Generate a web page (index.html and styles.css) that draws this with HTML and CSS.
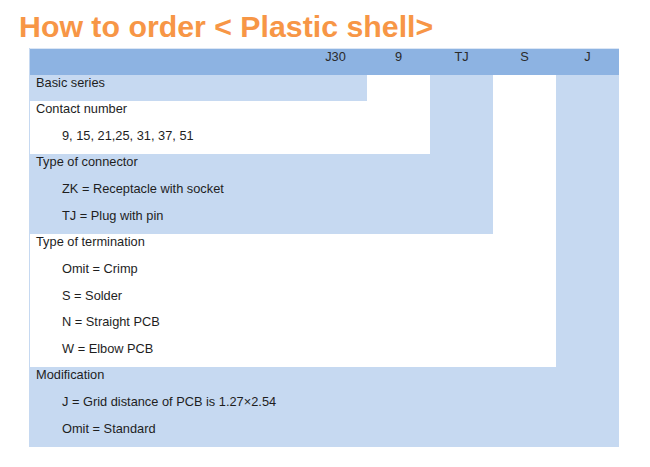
FILE: index.html
```html
<!DOCTYPE html>
<html lang="en">
<head>
    <meta charset="UTF-8">
    <meta name="viewport" content="width=device-width, initial-scale=1.0">
    <title>How to order - Plastic shell</title>
    <link rel="stylesheet" href="styles.css">
</head>
<body>
    <h1 class="page-title">How to order &lt; Plastic shell&gt;</h1>
    <div class="order-table">
        <!-- header row -->
        <div class="head-cell head-label"></div>
        <div class="head-cell">J30</div>
        <div class="head-cell">9</div>
        <div class="head-cell">TJ</div>
        <div class="head-cell">S</div>
        <div class="head-cell">J</div>

        <!-- column tails -->
        <div class="tail tail-tj"></div>
        <div class="tail tail-j"></div>

        <!-- groups -->
        <div class="group group-series">
            <div class="line">Basic series</div>
        </div>
        <div class="group group-contact">
            <div class="line">Contact number</div>
            <div class="line sub">9, 15, 21,25, 31, 37, 51</div>
        </div>
        <div class="group group-connector">
            <div class="line">Type of connector</div>
            <div class="line sub">ZK = Receptacle with socket</div>
            <div class="line sub">TJ = Plug with pin</div>
        </div>
        <div class="group group-termination">
            <div class="line">Type of termination</div>
            <div class="line sub">Omit = Crimp</div>
            <div class="line sub">S = Solder</div>
            <div class="line sub">N = Straight PCB</div>
            <div class="line sub">W = Elbow PCB</div>
        </div>
        <div class="group group-modification">
            <div class="line">Modification</div>
            <div class="line sub">J = Grid distance of PCB is 1.27&times;2.54</div>
            <div class="line sub">Omit = Standard</div>
        </div>
    </div>
</body>
</html>
```

FILE: styles.css
```css
body {
    margin: 0;
    padding: 0;
    background-color: white;
    font-family: "Liberation Sans", Arial, sans-serif;
    color: #1e1e1e;
}
.page-title {
    margin: 11px 0 0 19px;
    font-size: 30.3px;
    line-height: 31px;
    font-weight: bold;
    color: #f79646;
}
.order-table {
    display: grid;
    grid-template-columns: 274px repeat(5, 63px);
    grid-template-rows: 26.5px repeat(14, 26.64px);
    margin: 6px 0 0 29px;
    width: 589px;
    border-left: 1px solid #c6d9f1;
    box-sizing: border-box;
    font-size: 12.8px;
}
.head-cell {
    background-color: #8db3e2;
    border-top: 1px solid #dbe6f5;
    text-align: center;
    line-height: 15px;
    color: #2a2a2a;
}
.tail {
    background-color: #c6d9f1;
}
.tail-tj {
    grid-column: 4;
    grid-row: 2 / 5;
}
.tail-j {
    grid-column: 6;
    grid-row: 2 / 13;
}
.group {
    display: flex;
    flex-direction: column;
}
.group-series {
    grid-column: 1 / 3;
    grid-row: 2;
    background-color: #c6d9f1;
}
.group-contact {
    grid-column: 1 / 4;
    grid-row: 3 / 5;
}
.group-connector {
    grid-column: 1 / 5;
    grid-row: 5 / 8;
    background-color: #c6d9f1;
}
.group-termination {
    grid-column: 1 / 6;
    grid-row: 8 / 13;
}
.group-modification {
    grid-column: 1 / 7;
    grid-row: 13 / 16;
    background-color: #c6d9f1;
}
.line {
    height: 26.64px;
    flex-shrink: 0;
    line-height: 15px;
    padding-left: 6px;
}
.line.sub {
    padding-left: 32px;
}
```
